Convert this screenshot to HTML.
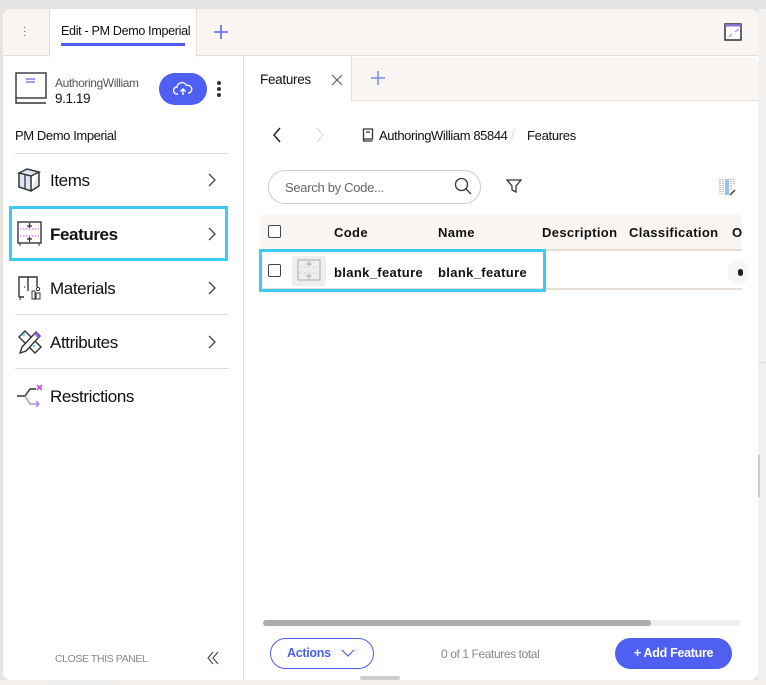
<!DOCTYPE html>
<html><head><style>
*{box-sizing:border-box;margin:0;padding:0}
body{width:766px;height:685px;background:#e6e5e4;font-family:"Liberation Sans",sans-serif;position:relative;overflow:hidden;color:#111}
.abs{position:absolute}
.card{left:3px;top:9px;width:755px;height:671px;background:#fff;border-radius:8px;overflow:hidden}
.hdr{left:0;top:0;width:755px;height:47px;background:#f8f5f2;border-bottom:1px solid #e8ded8}
.nav{font-size:17px;letter-spacing:-0.4px}
.sep{height:1px;background:#e3dcd7;left:12px;width:214px}
.b{font-size:13px;font-weight:bold;letter-spacing:0.35px}
</style></head><body>
<div class="abs" style="left:758px;top:9px;width:8px;height:676px;background:#f3f1ef"></div>
<div class="abs" style="left:757px;top:362px;width:9px;height:1px;background:#ddd"></div>
<div class="abs" style="left:757px;top:455px;width:3px;height:42px;background:#ccc"></div>
<div class="abs" style="left:0;top:680px;width:766px;height:5px;background:#f4f0ec"></div>
<div class="abs" style="left:48px;top:680px;width:70px;height:5px;background:#f0eeee"></div>
<div class="abs card">
 <div class="abs hdr"></div>
 <div class="abs" style="left:20px;top:17px;width:5px;height:14px;font-size:10px;line-height:4px;color:#555">·<br>·<br>·</div>
 <div class="abs" style="left:46px;top:0;width:148px;height:48px;background:#fff;border-left:1px solid #e8ded8;border-right:1px solid #e8ded8"></div>
 <div class="abs" style="left:58px;top:15px;font-size:12.5px;letter-spacing:-0.3px">Edit - PM Demo Imperial</div>
 <div class="abs" style="left:58px;top:34px;width:124px;height:3px;background:#4e5ef0"></div>
 <svg class="abs" style="left:210px;top:15px" width="16" height="16"><path d="M8 1v14M1 8h14" stroke="#5b69f0" stroke-width="1.6"/></svg>
 <svg class="abs" style="left:721px;top:14px" width="18" height="18"><rect x="1" y="1" width="16" height="16" fill="#fff" stroke="#222" stroke-width="1.4"/><rect x="1" y="1" width="16" height="2.5" fill="#8a70d0"/><path d="M11 9l4-3M5 14l3-3" stroke="#b9a3f0" stroke-width="1.5"/></svg>
 <div class="abs" style="left:240px;top:47px;width:1px;height:624px;background:#e8ded8"></div>
 <svg class="abs" style="left:12px;top:63px" width="34" height="34"><rect x="1" y="1" width="30" height="25" fill="none" stroke="#333" stroke-width="1.4"/><path d="M1 26v5h30" fill="none" stroke="#333" stroke-width="1.4"/><path d="M11 7h9M11 10h9" stroke="#9a6fe0" stroke-width="1.6"/></svg>
 <div class="abs" style="left:52px;top:67px;font-size:12px;color:#555;letter-spacing:-0.4px">AuthoringWilliam</div>
 <div class="abs" style="left:52px;top:82px;font-size:13.5px;letter-spacing:-0.4px">9.1.19</div>
 <div class="abs" style="left:156px;top:64px;width:48px;height:32px;border-radius:16px;background:#4f5ff2"></div>
 <svg class="abs" style="left:170px;top:72px" width="20" height="16"><path d="M5 13H4a3.5 3.5 0 0 1 0-7 5 5 0 0 1 9.5-1.5A3.8 3.8 0 0 1 16 12h-1M10 14V8M7.5 10.5L10 8l2.5 2.5" fill="none" stroke="#fff" stroke-width="1.4"/></svg>
 <div class="abs" style="left:214px;top:72px;width:4px;height:4px;border-radius:2px;background:#333;box-shadow:0 6px 0 #333,0 12px 0 #333"></div>
 <div class="abs" style="left:12px;top:119px;font-size:13px;letter-spacing:-0.4px">PM Demo Imperial</div>
 <div class="abs sep" style="top:144px"></div>
 <svg class="abs" style="left:14px;top:158px" width="24" height="26"><path d="M2 6l8-4 12 3-8 4zM2 6v14l12 4V9M22 5v14l-8 5" fill="#dde6f5" stroke="#333" stroke-width="1.5"/><path d="M8 8v14" stroke="#333" stroke-width="1.3"/></svg>
 <div class="abs nav" style="left:47px;top:162px">Items</div>
 <svg class="abs" style="left:204px;top:163px" width="10" height="16"><path d="M2 2l6 6-6 6" fill="none" stroke="#444" stroke-width="1.3"/></svg>
 <div class="abs" style="left:6px;top:197px;width:219px;height:55px;border:3px solid #3ccbf4"></div>
 <svg class="abs" style="left:14px;top:212px" width="26" height="26"><rect x="1" y="1" width="23" height="21" fill="none" stroke="#333" stroke-width="1.4"/><path d="M3 8h19M3 15h19" stroke="#c44be0" stroke-dasharray="1.5 1.5"/><path d="M12.5 2v5M10 5h5M12.5 16v5M10 18h5" stroke="#333" stroke-width="1.3"/><path d="M3 22v3M22 22v3" stroke="#333"/></svg>
 <div class="abs nav" style="left:47px;top:216px;font-weight:bold">Features</div>
 <svg class="abs" style="left:204px;top:217px" width="10" height="16"><path d="M2 2l6 6-6 6" fill="none" stroke="#444" stroke-width="1.3"/></svg>
 <svg class="abs" style="left:14px;top:266px" width="26" height="26"><path d="M2 22V2h18v10M11 2v14M2 22h5" fill="none" stroke="#333" stroke-width="1.4"/><path d="M3 22v3" stroke="#333"/><rect x="15" y="16" width="3" height="8" fill="none" stroke="#333"/><rect x="19" y="18" width="4" height="6" fill="none" stroke="#333"/><circle cx="21" cy="14" r="1.6" fill="none" stroke="#333"/><path d="M7 12h1" stroke="#b05ae0" stroke-width="2"/></svg>
 <div class="abs nav" style="left:47px;top:270px">Materials</div>
 <svg class="abs" style="left:204px;top:271px" width="10" height="16"><path d="M2 2l6 6-6 6" fill="none" stroke="#444" stroke-width="1.3"/></svg>
 <div class="abs sep" style="top:305px"></div>
 <svg class="abs" style="left:14px;top:320px" width="26" height="26"><path d="M2 8l6-6 16 16-6 6z" fill="none" stroke="#333" stroke-width="1.4"/><path d="M19 3l4 4-14 15-6 2 2-6z" fill="#fff" stroke="#333" stroke-width="1.4"/><path d="M18 4l4 4" stroke="#a061e8" stroke-width="3"/><path d="M6 7l2-2M16 18l2-2" stroke="#5bb8f0" stroke-width="1.5"/></svg>
 <div class="abs nav" style="left:47px;top:324px">Attributes</div>
 <svg class="abs" style="left:204px;top:325px" width="10" height="16"><path d="M2 2l6 6-6 6" fill="none" stroke="#444" stroke-width="1.3"/></svg>
 <div class="abs sep" style="top:359px"></div>
 <svg class="abs" style="left:13px;top:374px" width="28" height="26"><path d="M1 13h8l5-7h6" fill="none" stroke="#333" stroke-width="1.4"/><path d="M9 13l5 8h8M20 18l3 3-3 3" fill="none" stroke="#b28ee8" stroke-width="1.5"/><path d="M21 2l5 5M26 2l-5 5" stroke="#c04ce0" stroke-width="1.6"/></svg>
 <div class="abs nav" style="left:47px;top:378px">Restrictions</div>
 <div class="abs" style="left:52px;top:644px;font-size:10.5px;color:#888;letter-spacing:-0.4px">CLOSE THIS PANEL</div>
 <svg class="abs" style="left:202px;top:641px" width="16" height="16"><path d="M8 2L3 8l5 6M13 2L8 8l5 6" fill="none" stroke="#444" stroke-width="1.1"/></svg>
 <div class="abs" style="left:241px;top:48px;width:514px;height:44px;background:#f8f5f2;border-bottom:1px solid #e8ded8;border-radius:8px 8px 0 0"></div>
 <div class="abs" style="left:241px;top:48px;width:108px;height:45px;background:#fff;border-right:1px solid #e8ded8"></div>
 <div class="abs" style="left:257px;top:63px;font-size:13.5px;letter-spacing:-0.3px">Features</div>
 <svg class="abs" style="left:328px;top:65px" width="12" height="12"><path d="M1 1l10 10M11 1L1 11" stroke="#555" stroke-width="1"/></svg>
 <svg class="abs" style="left:367px;top:61px" width="16" height="16"><path d="M8 1v14M1 8h14" stroke="#7b86f2" stroke-width="1.5"/></svg>
 <svg class="abs" style="left:268px;top:117px" width="12" height="18"><path d="M9 2L3 9l6 7" fill="none" stroke="#222" stroke-width="1.5"/></svg>
 <svg class="abs" style="left:311px;top:117px" width="12" height="18"><path d="M3 2l6 7-6 7" fill="none" stroke="#ddd" stroke-width="1.3"/></svg>
 <svg class="abs" style="left:359px;top:119px" width="12" height="14"><rect x="1.5" y="1" width="9" height="10" fill="none" stroke="#333" stroke-width="1.3"/><path d="M1.5 11v2h9M4 4h4" stroke="#333" stroke-width="1.3" fill="none"/></svg>
 <div class="abs" style="left:376px;top:119px;font-size:13px;letter-spacing:-0.4px;width:132px;overflow:hidden;white-space:nowrap">AuthoringWilliam 85844</div>
 <div class="abs" style="left:508px;top:117px;font-size:14px;color:#ddd">/</div>
 <div class="abs" style="left:524px;top:119px;font-size:13px;letter-spacing:-0.3px">Features</div>
 <div class="abs" style="left:265px;top:161px;width:213px;height:34px;border:1px solid #ccc;border-radius:17px"></div>
 <div class="abs" style="left:282px;top:171px;font-size:13px;color:#666;letter-spacing:-0.3px">Search by Code...</div>
 <svg class="abs" style="left:451px;top:168px" width="18" height="18"><circle cx="7.5" cy="7.5" r="6" fill="none" stroke="#333" stroke-width="1.3"/><path d="M12 12l5 5" stroke="#333" stroke-width="1.3"/></svg>
 <svg class="abs" style="left:503px;top:169px" width="16" height="16"><path d="M1 2h14l-5 6v6l-4-2V8z" fill="none" stroke="#333" stroke-width="1.3"/></svg>
 <svg class="abs" style="left:716px;top:169px" width="18" height="18"><path d="M1 1v16M4 1v16M12 1v12M15 1v6" stroke="#888" stroke-dasharray="1 1"/><rect x="6" y="1" width="4" height="16" fill="#9ec0f5"/><path d="M11 17l5-5" stroke="#444" stroke-width="1.5"/></svg>
 <div class="abs" style="left:257px;top:205px;width:482px;height:37px;background:#f8f5f2;border-radius:6px 6px 0 0;border-bottom:2px solid #e8ded8"></div>
 <div class="abs" style="left:265px;top:216px;width:13px;height:13px;border:1px solid #444;border-radius:2px;background:#fff"></div>
 <div class="abs b" style="left:257px;top:216px;white-space:nowrap;width:482px;overflow:hidden;height:20px"><span class="abs" style="left:74px">Code</span><span class="abs" style="left:178px">Name</span><span class="abs" style="left:282px">Description</span><span class="abs" style="left:369px">Classification</span><span class="abs" style="left:472px">Op</span></div>
 <div class="abs" style="left:257px;top:279px;width:482px;height:2px;background:#e8ded8"></div>
 <div class="abs" style="left:725px;top:251px;width:20px;height:25px;border-radius:10px;background:#f8f5f2"></div>
 <div class="abs" style="left:735px;top:260px;width:5px;height:7px;border-radius:3px;background:#222"></div>
 <div class="abs" style="left:256px;top:240px;width:287px;height:43px;border:3px solid #3ccbf4"></div>
 <div class="abs" style="left:265px;top:255px;width:13px;height:13px;border:1px solid #444;border-radius:2px"></div>
 <div class="abs" style="left:289px;top:247px;width:34px;height:30px;background:#eee;border-radius:3px"></div>
 <svg class="abs" style="left:294px;top:250px" width="24" height="24"><rect x="1" y="1" width="22" height="20" fill="none" stroke="#aaa"/><path d="M3 8h18M3 14h18" stroke="#ccc" stroke-dasharray="1 1"/><path d="M12 2v5M12 15v5M9 5h6M9 17h6" stroke="#aaa"/></svg>
 <div class="abs b" style="left:331px;top:256px">blank_feature</div>
 <div class="abs b" style="left:435px;top:256px">blank_feature</div>
 <div class="abs" style="left:260px;top:611px;width:478px;height:6px;background:#efefef;border-radius:3px"></div>
 <div class="abs" style="left:260px;top:611px;width:388px;height:6px;background:#adadad;border-radius:3px"></div>
 <div class="abs" style="left:267px;top:629px;width:104px;height:31px;border:1px solid #4f5ff2;border-radius:16px"></div>
 <div class="abs" style="left:284px;top:637px;font-size:12.5px;font-weight:bold;color:#4f5ff2;letter-spacing:-0.3px">Actions</div>
 <svg class="abs" style="left:338px;top:639px" width="14" height="10"><path d="M1 2l6 6 6-6" fill="none" stroke="#4f5ff2" stroke-width="1.2"/></svg>
 <div class="abs" style="left:438px;top:638px;font-size:12px;color:#888;letter-spacing:-0.4px">0 of 1 Features total</div>
 <div class="abs" style="left:612px;top:629px;width:117px;height:31px;border-radius:16px;background:#4f5ff2;color:#fff;font-size:12.5px;font-weight:bold;text-align:center;line-height:31px;letter-spacing:-0.3px">+ Add Feature</div>
 <div class="abs" style="left:357px;top:667px;width:40px;height:4px;background:#ccc;border-radius:2px"></div>
</div>
</body></html>
